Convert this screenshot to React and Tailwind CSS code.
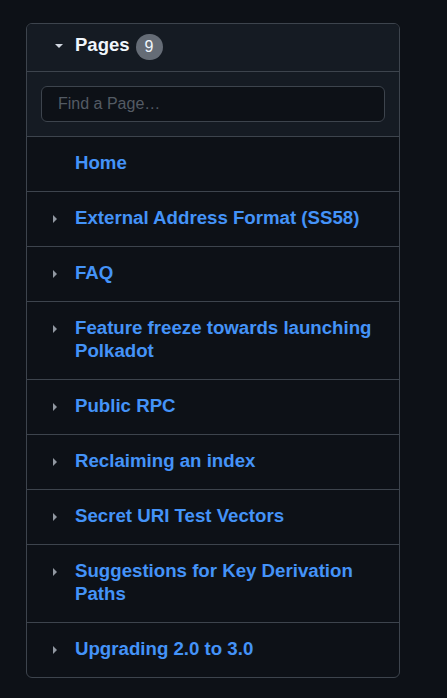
import React from 'react';

const pages = [
  { title: "Home", caret: false },
  { title: "External Address Format (SS58)", caret: true },
  { title: "FAQ", caret: true },
  { title: "Feature freeze towards launching Polkadot", caret: true },
  { title: "Public RPC", caret: true },
  { title: "Reclaiming an index", caret: true },
  { title: "Secret URI Test Vectors", caret: true },
  { title: "Suggestions for Key Derivation Paths", caret: true },
  { title: "Upgrading 2.0 to 3.0", caret: true },
];

function CaretRight() {
  return (
    <svg width="6" height="10" viewBox="0 0 6 10" className="shrink-0">
      <path d="M1 1 L5 5 L1 9 Z" fill="#9198a1" />
    </svg>
  );
}

function CaretDown() {
  return (
    <svg width="10" height="6" viewBox="0 0 10 6" className="shrink-0">
      <path d="M1 1 L9 1 L5 5 Z" fill="#d1d7e0" />
    </svg>
  );
}

export default function App() {
  return (
    <div className="min-h-screen bg-[#0d1117] pl-[26px] pt-[23px] pb-[18px] font-['Liberation_Sans',Arial,sans-serif]">
      <div className="w-[374px] rounded-md border border-[#3d444d] overflow-hidden">
        {/* header */}
        <div className="h-[48px] flex items-center bg-[#151b23] border-b border-[#3d444d]">
          <div className="w-[48px] shrink-0 pl-[27px] flex items-center -mt-[3px]">
            <CaretDown />
          </div>
          <span className="text-[18.5px] font-bold text-[#f0f6fc] leading-none -mt-[4px]">Pages</span>
          <span className="ml-[6px] w-[27px] h-[26px] rounded-full bg-[#656c76] text-[#f0f6fc] text-[16px] flex items-center justify-center -mt-[2px]">9</span>
        </div>

        {/* search */}
        <div className="bg-[#151b23] px-[14px] py-[14px] border-b border-[#3d444d]">
          <input
            type="text"
            placeholder="Find a Page…"
            className="w-full h-[36px] rounded-md bg-[#0d1117] border border-[#3d444d] px-[16px] text-[16px] text-[#f0f6fc] placeholder:text-[#545b64] outline-none"
          />
        </div>

        {/* list */}
        <ul>
          {pages.map((p, i) => (
            <li
              key={p.title}
              className={`flex items-start pt-[14px] pb-[17px] ${i < pages.length - 1 ? 'border-b border-[#3d444d]' : ''}`}
            >
              <div className="w-[48px] shrink-0 pl-[25px] h-[23px] flex items-center translate-y-[1px]">
                {p.caret && <CaretRight />}
              </div>
              <a href="#" className="text-[18.67px] leading-[23px] font-bold text-[#4493f8] pr-[20px]">
                {p.title}
              </a>
            </li>
          ))}
        </ul>
      </div>
    </div>
  );
}
